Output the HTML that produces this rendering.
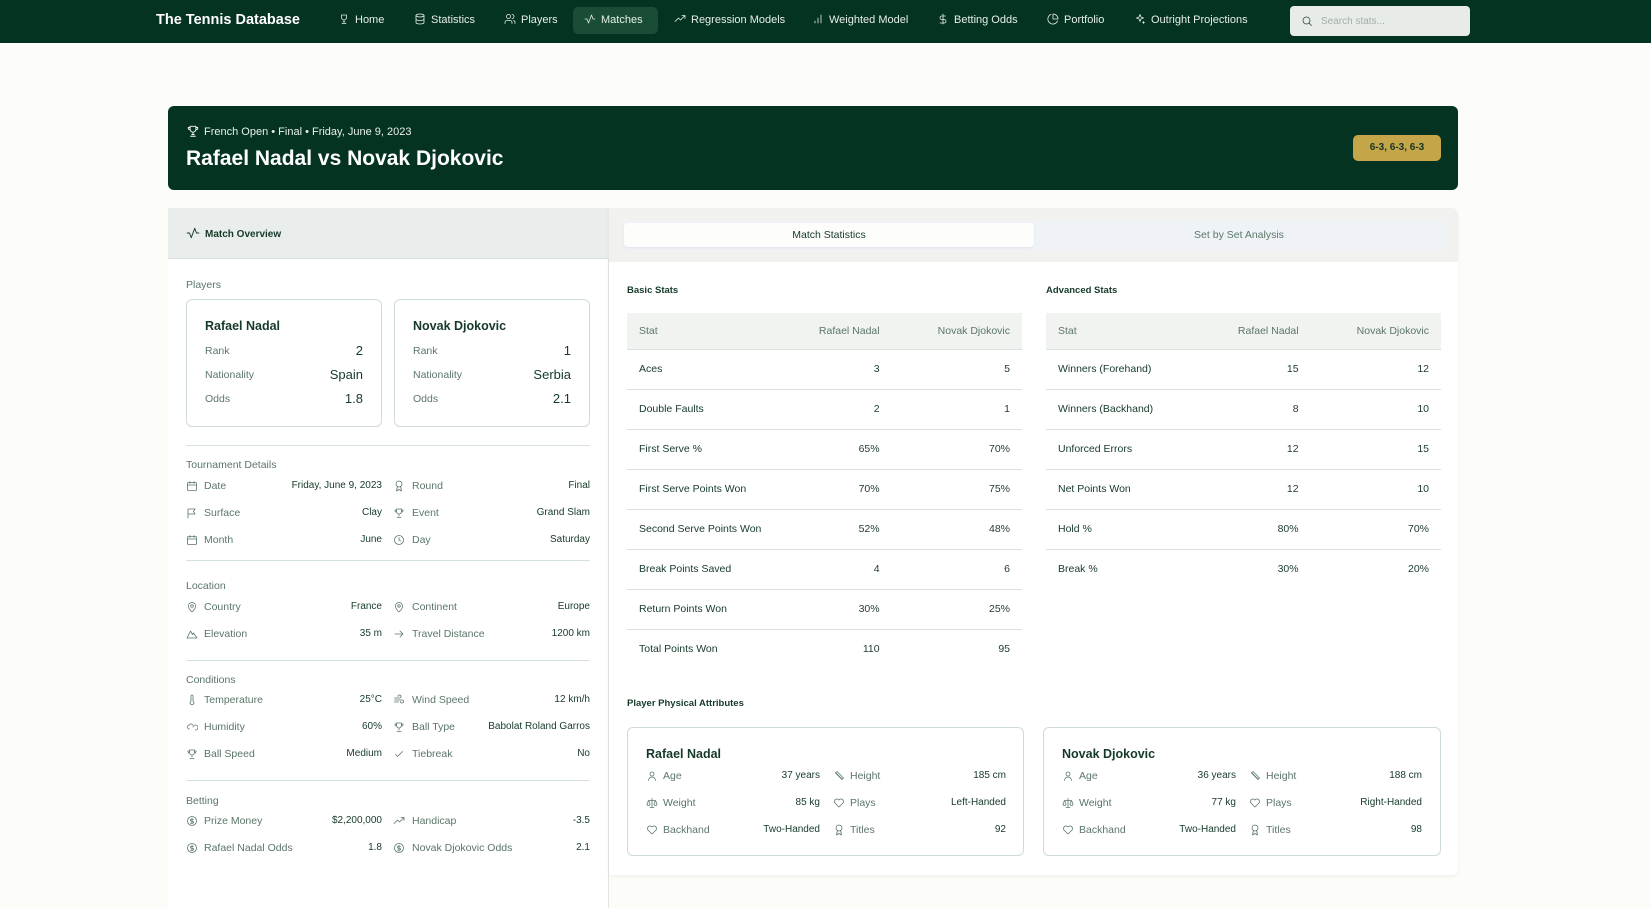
<!DOCTYPE html>
<html><head><meta charset="utf-8">
<style>
*{box-sizing:border-box;margin:0;padding:0}
body{width:1651px;height:895px;overflow:hidden;background:#fcfcf8;font-family:"Liberation Sans",sans-serif;color:#163a28;position:relative}
.a{position:absolute}
.nav{left:0;top:0;width:1651px;height:43px;background:#053321}
.brand{left:156px;top:12px;color:#fff;font-size:14.5px;font-weight:bold}
.ni{top:7px;height:27px;line-height:27px;color:#e6efe9;font-size:11px;white-space:nowrap;padding-left:2px}
.ni svg{vertical-align:-2px;margin-right:5px}
.act{background:#1a4d35;border-radius:5px}
.search{left:1290px;top:6px;width:180px;height:30px;background:#e8ece8;border-radius:4px;font-size:10px;color:#a3aea8;padding:10px 0 0 31px}
.hero{left:168px;top:106px;width:1290px;height:84px;background:#053321;border-radius:6px}
.lbl{color:#5b7668;font-size:10.5px;white-space:nowrap}
.val{color:#163a28;font-size:10px;text-align:right;white-space:nowrap}
.sep{height:1px;background:#d6e2dc}
table{border-collapse:collapse;font-size:10.5px}
td,th{height:40px;border-bottom:1px solid #d8e2dd;padding:0 12px}
th{height:36px;background:#f1f3f1;color:#5b7668;font-weight:normal;text-align:right}
th:first-child,td:first-child{text-align:left}
td{text-align:right;color:#1f3b2c}
td:first-child{color:#163a28}
tr:last-child td{border-bottom:none}
.card{border:1px solid #cfdbd5;border-radius:6px;background:#fff}
svg.i{width:12px;height:12px;fill:none;stroke:#5b7668;stroke-width:1.6;stroke-linecap:round;stroke-linejoin:round}
</style></head><body>
<div class="a nav"></div>
<div class="a brand">The Tennis Database</div>
<div class="a ni" style="left:336px"><svg class="i" style="stroke:#e6efe9" viewBox="0 0 24 24"><path d="M7 4h10v5a5 5 0 0 1-10 0z M12 14v4 M8 21h8 M10 18h4"/></svg>Home</div>
<div class="a ni" style="left:412px"><svg class="i" style="stroke:#e6efe9" viewBox="0 0 24 24"><ellipse cx="12" cy="5" rx="8" ry="3"/><path d="M4 5v14c0 1.7 3.6 3 8 3s8-1.3 8-3V5 M4 12c0 1.7 3.6 3 8 3s8-1.3 8-3"/></svg>Statistics</div>
<div class="a ni" style="left:502px"><svg class="i" style="stroke:#e6efe9" viewBox="0 0 24 24"><circle cx="9" cy="7" r="4"/><path d="M2 21v-2a4 4 0 0 1 4-4h6a4 4 0 0 1 4 4v2 M16 3a4 4 0 0 1 0 8 M22 21v-2a4 4 0 0 0-3-4"/></svg>Players</div>
<div class="a ni act" style="left:573px;width:85px;padding-left:11px"><svg class="i" style="stroke:#e6efe9" viewBox="0 0 24 24"><path d="M2 12h4l3 8 6-16 3 8h4"/></svg>Matches</div>
<div class="a ni" style="left:672px"><svg class="i" style="stroke:#e6efe9" viewBox="0 0 24 24"><path d="M2 17l7-7 4 4 9-9 M16 5h6v6"/></svg>Regression Models</div>
<div class="a ni" style="left:810px"><svg class="i" style="stroke:#e6efe9" viewBox="0 0 24 24"><path d="M6 20v-4 M12 20V10 M18 20V4"/></svg>Weighted Model</div>
<div class="a ni" style="left:935px"><svg class="i" style="stroke:#e6efe9" viewBox="0 0 24 24"><path d="M12 2v20 M17 6H9.5a3.5 3.5 0 0 0 0 7h5a3.5 3.5 0 0 1 0 7H6"/></svg>Betting Odds</div>
<div class="a ni" style="left:1045px"><svg class="i" style="stroke:#e6efe9" viewBox="0 0 24 24"><path d="M21 15.9A10 10 0 1 1 8 2.8 M22 12A10 10 0 0 0 12 2v10z"/></svg>Portfolio</div>
<div class="a ni" style="left:1132px"><svg class="i" style="stroke:#e6efe9" viewBox="0 0 24 24"><path d="M12 3l2 5 5 2-5 2-2 5-2-5-5-2 5-2z M19 17v4 M17 19h4"/></svg>Outright Projections</div>
<div class="a search"><svg class="a i" style="left:11px;top:9px;stroke:#2b4a3a" viewBox="0 0 24 24"><circle cx="11" cy="11" r="7"/><path d="M21 21l-5-5"/></svg>Search stats...</div>

<div class="a hero"></div>
<div class="a" style="left:186px;top:124px;color:#e9f0ec;font-size:11px;white-space:nowrap"><svg class="i" style="stroke:#fff;width:14px;height:14px;vertical-align:-3px;margin-right:4px" viewBox="0 0 24 24"><path d="M7 4h10v5a5 5 0 0 1-10 0z M7 6H4a3 3 0 0 0 3 4 M17 6h3a3 3 0 0 1-3 4 M12 14v4 M8 21h8 M10 18h4"/></svg>French Open • Final • Friday, June 9, 2023</div>
<div class="a" style="left:186px;top:147px;color:#fff;font-size:21px;font-weight:bold;white-space:nowrap">Rafael Nadal vs Novak Djokovic</div>
<div class="a" style="left:1353px;top:135px;width:88px;height:26px;background:#c4a548;border-radius:5px;font-size:10px;font-weight:bold;color:#153524;text-align:center;line-height:26px">6-3, 6-3, 6-3</div>

<div class="a" style="left:168px;top:208px;width:441px;height:700px;background:#fff;border-right:1px solid #e0e6e2"></div>
<div class="a" style="left:168px;top:208px;width:441px;height:51px;background:#e9edeb;border-bottom:1px solid #d9e2dd"></div>
<div class="a" style="left:186px;top:226px;font-size:10px;font-weight:bold;color:#163a28;white-space:nowrap"><svg class="i" style="stroke:#163a28;width:14px;height:14px;vertical-align:-3px;margin-right:5px" viewBox="0 0 24 24"><path d="M2 12h4l3 8 6-16 3 8h4"/></svg>Match Overview</div>
<div class="a" style="left:609px;top:208px;width:849px;height:667px;background:#fff;border-radius:0 6px 6px 0;box-shadow:0 2px 4px rgba(0,0,0,.05)"></div>
<div class="a" style="left:609px;top:208px;width:849px;height:54px;background:#f1f2f0;border-radius:0 6px 0 0"></div>
<div class="a" style="left:623px;top:221px;width:823px;height:28px;background:#eff3f8;border-radius:4px"></div>
<div class="a" style="left:624px;top:223px;width:410px;height:24px;background:#fdfdfb;border-radius:4px;box-shadow:0 1px 2px rgba(0,0,0,.06);font-size:10.5px;text-align:center;line-height:24px">Match Statistics</div>
<div class="a" style="left:1034px;top:223px;width:410px;height:24px;font-size:10.5px;color:#5b7668;text-align:center;line-height:24px">Set by Set Analysis</div>

<div class="a lbl" style="left:186px;top:279px">Players</div>
<div class="a card" style="left:186px;top:299px;width:196px;height:128px"></div>
<div class="a card" style="left:394px;top:299px;width:196px;height:128px"></div>
<div class="a" style="left:205px;top:319px;font-size:12.5px;font-weight:bold;white-space:nowrap">Rafael Nadal</div>
<div class="a lbl" style="left:205px;top:345px">Rank</div><div class="a" style="left:300px;width:63px;top:343px;text-align:right;font-size:13px">2</div>
<div class="a lbl" style="left:205px;top:369px">Nationality</div><div class="a" style="left:300px;width:63px;top:367px;text-align:right;font-size:13px">Spain</div>
<div class="a lbl" style="left:205px;top:393px">Odds</div><div class="a" style="left:300px;width:63px;top:391px;text-align:right;font-size:13px">1.8</div>
<div class="a" style="left:413px;top:319px;font-size:12.5px;font-weight:bold;white-space:nowrap">Novak Djokovic</div>
<div class="a lbl" style="left:413px;top:345px">Rank</div><div class="a" style="left:508px;width:63px;top:343px;text-align:right;font-size:13px">1</div>
<div class="a lbl" style="left:413px;top:369px">Nationality</div><div class="a" style="left:508px;width:63px;top:367px;text-align:right;font-size:13px">Serbia</div>
<div class="a lbl" style="left:413px;top:393px">Odds</div><div class="a" style="left:508px;width:63px;top:391px;text-align:right;font-size:13px">2.1</div>

<div class="a sep" style="left:186px;top:445px;width:404px"></div>
<div class="a lbl" style="left:186px;top:459px">Tournament Details</div>
<div class="a sep" style="left:186px;top:560px;width:404px"></div>
<div class="a lbl" style="left:186px;top:580px">Location</div>
<div class="a sep" style="left:186px;top:660px;width:404px"></div>
<div class="a lbl" style="left:186px;top:674px">Conditions</div>
<div class="a sep" style="left:186px;top:780px;width:404px"></div>
<div class="a lbl" style="left:186px;top:795px">Betting</div>

<svg class="a i" style="left:186px;top:480px" viewBox="0 0 24 24"><rect x="3" y="5" width="18" height="16" rx="2"/><path d="M3 10h18 M8 3v4 M16 3v4"/></svg><div class="a lbl" style="left:204px;top:480px">Date</div><div class="a val" style="left:252px;width:130px;top:480px">Friday, June 9, 2023</div>
<svg class="a i" style="left:393px;top:480px" viewBox="0 0 24 24"><circle cx="12" cy="8" r="6"/><path d="M9 13l-2 9 5-3 5 3-2-9"/></svg><div class="a lbl" style="left:412px;top:480px">Round</div><div class="a val" style="left:470px;width:120px;top:480px">Final</div>
<svg class="a i" style="left:186px;top:507px" viewBox="0 0 24 24"><path d="M4 22V4 M4 4h14l-3 5 3 5H4"/></svg><div class="a lbl" style="left:204px;top:507px">Surface</div><div class="a val" style="left:252px;width:130px;top:507px">Clay</div>
<svg class="a i" style="left:393px;top:507px" viewBox="0 0 24 24"><path d="M7 4h10v5a5 5 0 0 1-10 0z M7 6H4a3 3 0 0 0 3 4 M17 6h3a3 3 0 0 1-3 4 M12 14v4 M8 21h8"/></svg><div class="a lbl" style="left:412px;top:507px">Event</div><div class="a val" style="left:470px;width:120px;top:507px">Grand Slam</div>
<svg class="a i" style="left:186px;top:534px" viewBox="0 0 24 24"><rect x="3" y="5" width="18" height="16" rx="2"/><path d="M3 10h18 M8 3v4 M16 3v4"/></svg><div class="a lbl" style="left:204px;top:534px">Month</div><div class="a val" style="left:252px;width:130px;top:534px">June</div>
<svg class="a i" style="left:393px;top:534px" viewBox="0 0 24 24"><circle cx="12" cy="12" r="9"/><path d="M12 7v5l3 2"/></svg><div class="a lbl" style="left:412px;top:534px">Day</div><div class="a val" style="left:470px;width:120px;top:534px">Saturday</div>

<svg class="a i" style="left:186px;top:601px" viewBox="0 0 24 24"><path d="M12 22s-7-6-7-12a7 7 0 0 1 14 0c0 6-7 12-7 12z"/><circle cx="12" cy="10" r="2.5"/></svg><div class="a lbl" style="left:204px;top:601px">Country</div><div class="a val" style="left:252px;width:130px;top:601px">France</div>
<svg class="a i" style="left:393px;top:601px" viewBox="0 0 24 24"><path d="M12 22s-7-6-7-12a7 7 0 0 1 14 0c0 6-7 12-7 12z"/><circle cx="12" cy="10" r="2.5"/></svg><div class="a lbl" style="left:412px;top:601px">Continent</div><div class="a val" style="left:470px;width:120px;top:601px">Europe</div>
<svg class="a i" style="left:186px;top:628px" viewBox="0 0 24 24"><path d="M2 20l7-14 4 7 2-3 7 10z"/></svg><div class="a lbl" style="left:204px;top:628px">Elevation</div><div class="a val" style="left:252px;width:130px;top:628px">35 m</div>
<svg class="a i" style="left:393px;top:628px" viewBox="0 0 24 24"><path d="M4 12h16 M14 6l6 6-6 6"/></svg><div class="a lbl" style="left:412px;top:628px">Travel Distance</div><div class="a val" style="left:470px;width:120px;top:628px">1200 km</div>

<svg class="a i" style="left:186px;top:694px" viewBox="0 0 24 24"><path d="M14 14V4a2 2 0 0 0-4 0v10a4 4 0 1 0 4 0z"/></svg><div class="a lbl" style="left:204px;top:694px">Temperature</div><div class="a val" style="left:252px;width:130px;top:694px">25°C</div>
<svg class="a i" style="left:393px;top:694px" viewBox="0 0 24 24"><path d="M3 8h10a3 3 0 1 0-3-3 M3 12h15a3 3 0 1 1-3 3 M3 16h8"/></svg><div class="a lbl" style="left:412px;top:694px">Wind Speed</div><div class="a val" style="left:470px;width:120px;top:694px">12 km/h</div>
<svg class="a i" style="left:186px;top:721px" viewBox="0 0 24 24"><path d="M7 16a4 4 0 0 1 0-8c1-3 5-3 6 0 M14 12a5 5 0 1 1 5 6"/></svg><div class="a lbl" style="left:204px;top:721px">Humidity</div><div class="a val" style="left:252px;width:130px;top:721px">60%</div>
<svg class="a i" style="left:393px;top:721px" viewBox="0 0 24 24"><path d="M7 4h10v5a5 5 0 0 1-10 0z M7 6H4a3 3 0 0 0 3 4 M17 6h3a3 3 0 0 1-3 4 M12 14v4 M8 21h8"/></svg><div class="a lbl" style="left:412px;top:721px">Ball Type</div><div class="a val" style="left:460px;width:130px;top:721px">Babolat Roland Garros</div>
<svg class="a i" style="left:186px;top:748px" viewBox="0 0 24 24"><path d="M7 4h10v5a5 5 0 0 1-10 0z M7 6H4a3 3 0 0 0 3 4 M17 6h3a3 3 0 0 1-3 4 M12 14v4 M8 21h8"/></svg><div class="a lbl" style="left:204px;top:748px">Ball Speed</div><div class="a val" style="left:252px;width:130px;top:748px">Medium</div>
<svg class="a i" style="left:393px;top:748px" viewBox="0 0 24 24"><path d="M5 13l4 4 10-10"/></svg><div class="a lbl" style="left:412px;top:748px">Tiebreak</div><div class="a val" style="left:470px;width:120px;top:748px">No</div>

<svg class="a i" style="left:186px;top:815px" viewBox="0 0 24 24"><circle cx="12" cy="12" r="9"/><path d="M15 8.5h-4a2 2 0 0 0 0 4h2a2 2 0 0 1 0 4H9 M12 6v12"/></svg><div class="a lbl" style="left:204px;top:815px">Prize Money</div><div class="a val" style="left:252px;width:130px;top:815px">$2,200,000</div>
<svg class="a i" style="left:393px;top:815px" viewBox="0 0 24 24"><path d="M2 17l7-7 4 4 9-9 M16 5h6v6"/></svg><div class="a lbl" style="left:412px;top:815px">Handicap</div><div class="a val" style="left:470px;width:120px;top:815px">-3.5</div>
<svg class="a i" style="left:186px;top:842px" viewBox="0 0 24 24"><circle cx="12" cy="12" r="9"/><path d="M15 8.5h-4a2 2 0 0 0 0 4h2a2 2 0 0 1 0 4H9 M12 6v12"/></svg><div class="a lbl" style="left:204px;top:842px">Rafael Nadal Odds</div><div class="a val" style="left:252px;width:130px;top:842px">1.8</div>
<svg class="a i" style="left:393px;top:842px" viewBox="0 0 24 24"><circle cx="12" cy="12" r="9"/><path d="M15 8.5h-4a2 2 0 0 0 0 4h2a2 2 0 0 1 0 4H9 M12 6v12"/></svg><div class="a lbl" style="left:412px;top:842px">Novak Djokovic Odds</div><div class="a val" style="left:470px;width:120px;top:842px">2.1</div>

<div class="a" style="left:627px;top:285px;font-size:9.5px;font-weight:bold;white-space:nowrap">Basic Stats</div>
<table class="a" style="left:627px;top:313px;width:395px">
<tr><th style="width:150px">Stat</th><th>Rafael Nadal</th><th>Novak Djokovic</th></tr>
<tr><td>Aces</td><td>3</td><td>5</td></tr>
<tr><td>Double Faults</td><td>2</td><td>1</td></tr>
<tr><td>First Serve %</td><td>65%</td><td>70%</td></tr>
<tr><td>First Serve Points Won</td><td>70%</td><td>75%</td></tr>
<tr><td>Second Serve Points Won</td><td>52%</td><td>48%</td></tr>
<tr><td>Break Points Saved</td><td>4</td><td>6</td></tr>
<tr><td>Return Points Won</td><td>30%</td><td>25%</td></tr>
<tr><td>Total Points Won</td><td>110</td><td>95</td></tr>
</table>
<div class="a" style="left:1046px;top:285px;font-size:9.5px;font-weight:bold;white-space:nowrap">Advanced Stats</div>
<table class="a" style="left:1046px;top:313px;width:395px">
<tr><th style="width:150px">Stat</th><th>Rafael Nadal</th><th>Novak Djokovic</th></tr>
<tr><td>Winners (Forehand)</td><td>15</td><td>12</td></tr>
<tr><td>Winners (Backhand)</td><td>8</td><td>10</td></tr>
<tr><td>Unforced Errors</td><td>12</td><td>15</td></tr>
<tr><td>Net Points Won</td><td>12</td><td>10</td></tr>
<tr><td>Hold %</td><td>80%</td><td>70%</td></tr>
<tr><td>Break %</td><td>30%</td><td>20%</td></tr>
</table>

<div class="a" style="left:627px;top:698px;font-size:9.5px;font-weight:bold;white-space:nowrap">Player Physical Attributes</div>
<div class="a card" style="left:627px;top:727px;width:397px;height:129px"></div>
<div class="a card" style="left:1043px;top:727px;width:398px;height:129px"></div>

<div class="a" style="left:646px;top:747px;font-size:12.5px;font-weight:bold;white-space:nowrap">Rafael Nadal</div>
<svg class="a i" style="left:646px;top:770px" viewBox="0 0 24 24"><circle cx="12" cy="8" r="4"/><path d="M5 21a7 7 0 0 1 14 0"/></svg><div class="a lbl" style="left:663px;top:770px">Age</div><div class="a val" style="left:720px;width:100px;top:770px">37 years</div>
<svg class="a i" style="left:833px;top:770px" viewBox="0 0 24 24"><path d="M5 5l14 14 M8 3l13 13-3 3L5 6z"/></svg><div class="a lbl" style="left:850px;top:770px">Height</div><div class="a val" style="left:906px;width:100px;top:770px">185 cm</div>
<svg class="a i" style="left:646px;top:797px" viewBox="0 0 24 24"><path d="M12 3v18 M5 7h14 M5 7l-3 7a3 3 0 0 0 6 0z M19 7l-3 7a3 3 0 0 0 6 0z M8 21h8"/></svg><div class="a lbl" style="left:663px;top:797px">Weight</div><div class="a val" style="left:720px;width:100px;top:797px">85 kg</div>
<svg class="a i" style="left:833px;top:797px" viewBox="0 0 24 24"><path d="M12 20l-8-8a5 5 0 0 1 8-6 5 5 0 0 1 8 6z"/></svg><div class="a lbl" style="left:850px;top:797px">Plays</div><div class="a val" style="left:906px;width:100px;top:797px">Left-Handed</div>
<svg class="a i" style="left:646px;top:824px" viewBox="0 0 24 24"><path d="M12 20l-8-8a5 5 0 0 1 8-6 5 5 0 0 1 8 6z"/></svg><div class="a lbl" style="left:663px;top:824px">Backhand</div><div class="a val" style="left:720px;width:100px;top:824px">Two-Handed</div>
<svg class="a i" style="left:833px;top:824px" viewBox="0 0 24 24"><circle cx="12" cy="8" r="6"/><path d="M9 13l-2 9 5-3 5 3-2-9"/></svg><div class="a lbl" style="left:850px;top:824px">Titles</div><div class="a val" style="left:906px;width:100px;top:824px">92</div>

<div class="a" style="left:1062px;top:747px;font-size:12.5px;font-weight:bold;white-space:nowrap">Novak Djokovic</div>
<svg class="a i" style="left:1062px;top:770px" viewBox="0 0 24 24"><circle cx="12" cy="8" r="4"/><path d="M5 21a7 7 0 0 1 14 0"/></svg><div class="a lbl" style="left:1079px;top:770px">Age</div><div class="a val" style="left:1136px;width:100px;top:770px">36 years</div>
<svg class="a i" style="left:1249px;top:770px" viewBox="0 0 24 24"><path d="M5 5l14 14 M8 3l13 13-3 3L5 6z"/></svg><div class="a lbl" style="left:1266px;top:770px">Height</div><div class="a val" style="left:1322px;width:100px;top:770px">188 cm</div>
<svg class="a i" style="left:1062px;top:797px" viewBox="0 0 24 24"><path d="M12 3v18 M5 7h14 M5 7l-3 7a3 3 0 0 0 6 0z M19 7l-3 7a3 3 0 0 0 6 0z M8 21h8"/></svg><div class="a lbl" style="left:1079px;top:797px">Weight</div><div class="a val" style="left:1136px;width:100px;top:797px">77 kg</div>
<svg class="a i" style="left:1249px;top:797px" viewBox="0 0 24 24"><path d="M12 20l-8-8a5 5 0 0 1 8-6 5 5 0 0 1 8 6z"/></svg><div class="a lbl" style="left:1266px;top:797px">Plays</div><div class="a val" style="left:1322px;width:100px;top:797px">Right-Handed</div>
<svg class="a i" style="left:1062px;top:824px" viewBox="0 0 24 24"><path d="M12 20l-8-8a5 5 0 0 1 8-6 5 5 0 0 1 8 6z"/></svg><div class="a lbl" style="left:1079px;top:824px">Backhand</div><div class="a val" style="left:1136px;width:100px;top:824px">Two-Handed</div>
<svg class="a i" style="left:1249px;top:824px" viewBox="0 0 24 24"><circle cx="12" cy="8" r="6"/><path d="M9 13l-2 9 5-3 5 3-2-9"/></svg><div class="a lbl" style="left:1266px;top:824px">Titles</div><div class="a val" style="left:1322px;width:100px;top:824px">98</div>
</body></html>
